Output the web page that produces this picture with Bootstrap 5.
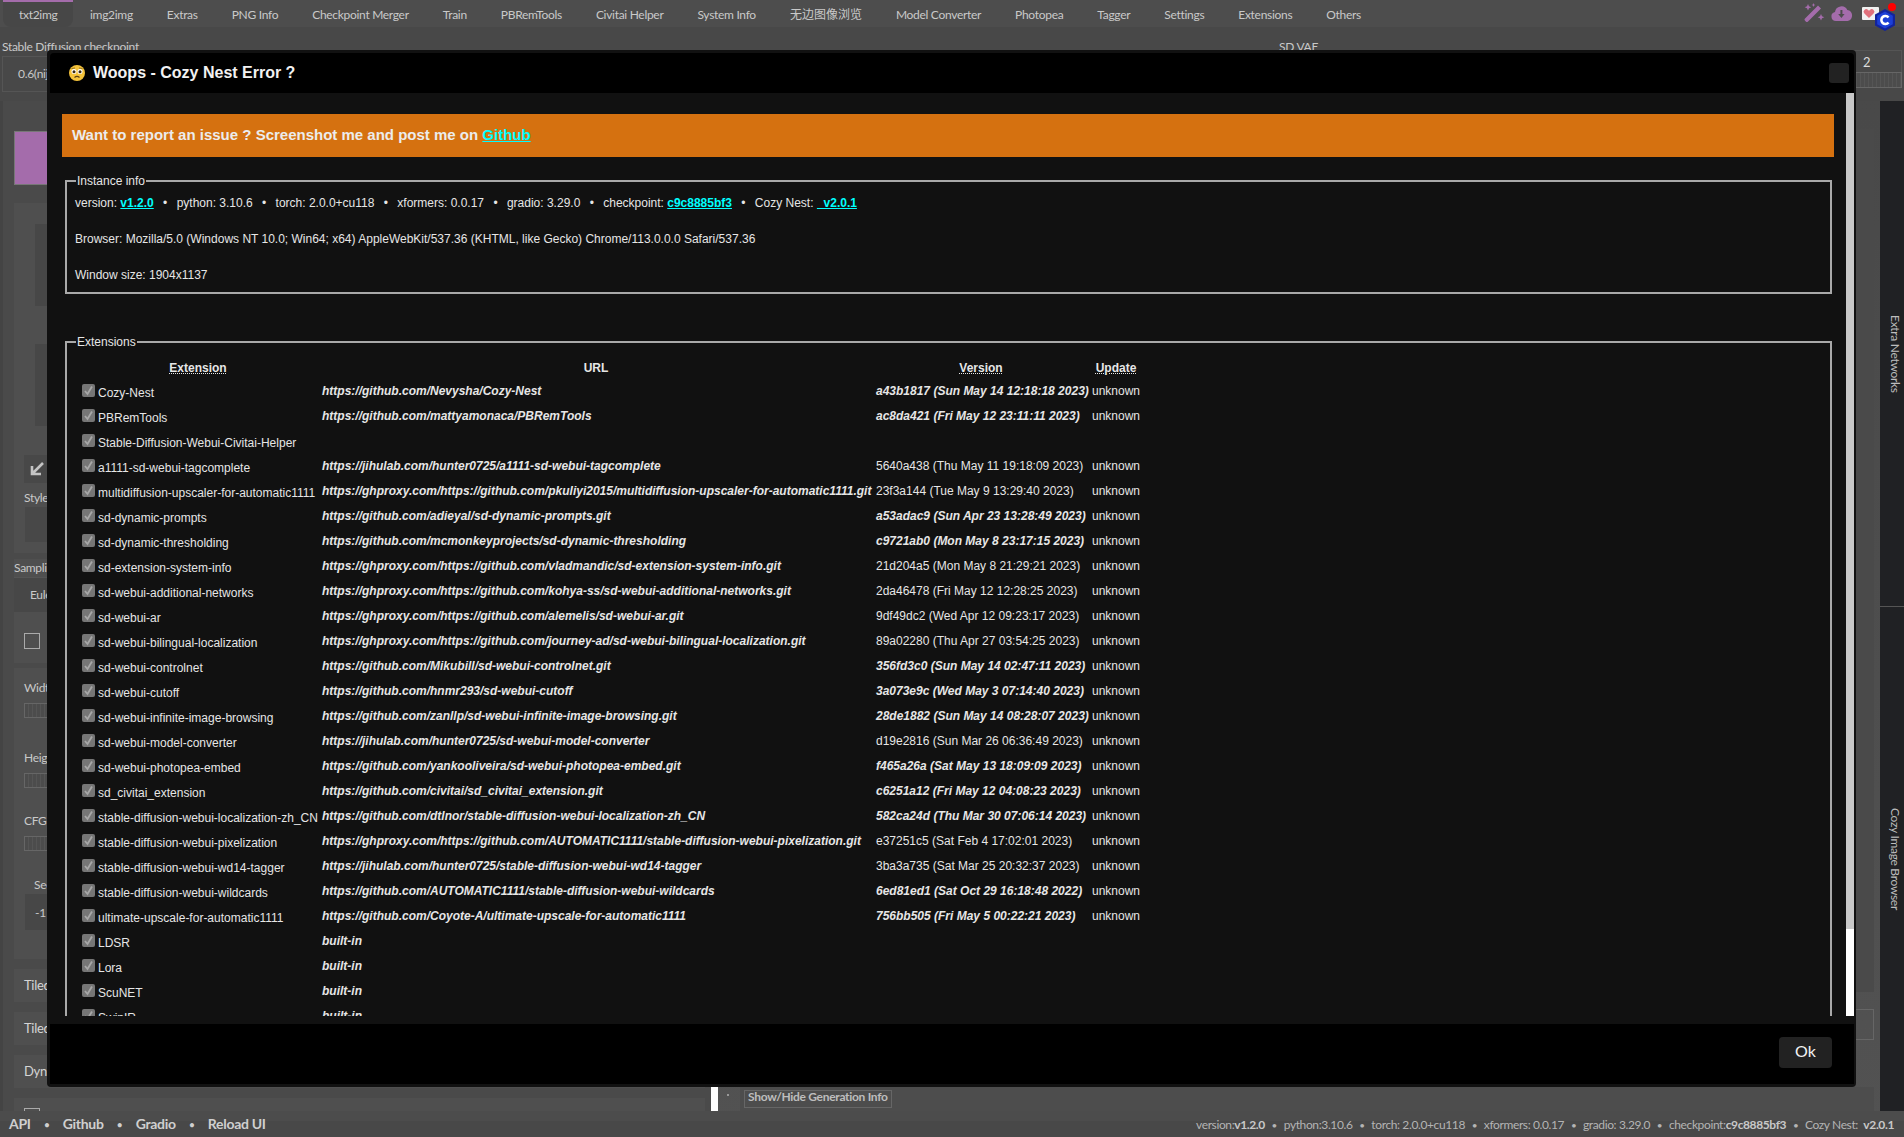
<!DOCTYPE html>
<html lang="en">
<head>
<meta charset="utf-8">
<title>Woops - Cozy Nest Error ?</title>
<link href="https://cdn.jsdelivr.net/npm/bootstrap@5.3.0/dist/css/bootstrap.min.css" rel="stylesheet">
<style>
html,body{height:1137px;overflow:hidden}
body{background:linear-gradient(#484848,#525252);color:#c9c9c9;font-family:Lato,"Noto Sans CJK SC",sans-serif;font-size:12px;line-height:15px;letter-spacing:-.3px;position:relative}
.stage{height:1137px}
.tabbar{height:27px;background:#4d4d4d;flex:none}
.tabbar-tabs{padding-left:3px}
.tabitem{padding:0 17px;height:27px;line-height:29px;color:#c9c9c9;white-space:nowrap}
.tabitem-on{width:70px;padding:0 0 0 16px;background:#474747;border-top:2px solid #a46cab;line-height:26px;border-radius:0 0 8px 8px}
.tabitem-cjk{letter-spacing:0}
.topicons{width:110px;position:relative}
.toprow{height:74px;flex:none;background:#484848}
.ckpt{width:1279px;padding:12px 0 0 2px}
.ckpt-box{margin-top:2px;height:36px;width:600px;border:1px solid #555;padding:9px 0 0 15px}
.vae{width:549px;padding-top:12px}
.numcol{width:74px;padding-top:23px}
.num-box{height:22px;border:1px solid #555;border-bottom:0;padding:4px 0 0 34px;color:#ddd;font-size:13px}
.hatch{background:repeating-linear-gradient(90deg,#4c4c4c 0,#4c4c4c 3px,#555 3px,#555 4px)}
.num-slide{height:16px;border:1px solid #666}
.workrow{height:1010px;flex:none;overflow:hidden}
.leftwrap{width:711px;padding:30px 6px 0 14px;flex:none;overflow:hidden;background:linear-gradient(90deg,#444 0,#444 3px,#4a4a4a 3px)}
.btn-gen{height:54px;background:#a46cab;border:1px solid #777}
.pnl{background:#4f4f4f}
.pnl-a{height:350px;margin-top:18px;padding:21px 10px 0 10px}
.inset{height:82px;margin-left:11px;background:#474747}
.inset+.inset{margin-top:38px}
.arrowbtn{width:60px;height:28px;margin-top:29px;background:#484848;color:#c9c9c9;display:flex;align-items:center;padding-left:4px}
.stylelab{margin-top:7px;height:17px}
.stylebox{height:35px;background:#484848;margin:0 0 0 1px}
.pnl-b{height:104px;margin-top:6px}
.pnl-b-head{height:18px;padding-top:1px}
.pnl-b-box{height:35px;background:#474747;border-top:1px solid #555;padding:9px 0 0 16px}
.tick-off{width:16px;height:16px;border:1px solid #aaa;margin:21px 0 0 10px}
.pnl-c{height:291px;margin-top:5px;padding:12px 10px 0}
.slide{height:15px;border:1px solid #666;margin:8px 0 0}
.pnl-c-lab{margin-top:32px}
.pnl-c-lab.first{margin-top:0}
.pnl-c-lab.third{margin-top:25px}
.seed-lab{margin:26px 0 0 10px}
.seed-box{height:36px;background:#474747;margin:2px 0 0 1px;padding:11px 0 0 10px}
.acc{background:#4f4f4f;height:33px;padding:9px 10px 0;margin-top:10px;color:#d5d5d5;font-size:13px}
.acc-last{height:40px;padding:10px 0 0 10px}
.tick-small{width:16px;height:16px;border:1px solid #aaa}
.gutter{width:14px;flex:none;padding-top:986px}
.gutter-bar{width:7px;height:24px;background:#fff}
.rightwrap{flex:1;padding:28px 6px 0 0;overflow:hidden}
.rpanel{height:863px;background:#4a4a4a}
.rbox{height:31px;margin-top:17px;border:1px solid #666}
.gen-wrap{margin-top:47px;height:24px}
.gen-dot{width:2px;height:2px;background:#999;margin:7px 11px 0 2px;flex:none}
.gen-row{flex:1;background:#4d4d4d;padding:2px 0 0 4px}
.gen-btn{display:inline-block;height:18px;border:1px solid #666;padding:0 3px;line-height:12px;color:#bdbdbd;font-size:12px;font-weight:700}
.rail{width:24px;flex:none;background:#202124;height:1010px}
.railcell{height:505px;writing-mode:vertical-rl;color:#bdbdbd;font-size:12px;line-height:24px;padding-left:3px}
.railcell+.railcell{border-top:1px solid #555}
.footbar{height:26px;flex:none;background:linear-gradient(#4c4c4c 0,#4c4c4c 10px,#484848 10px);padding:0 10px 0 9px}
.foot-l{font-size:14px;font-weight:700;color:#cfcfcf}
.foot-l .dotsep{margin:0 13px;font-weight:400;font-size:11px}
.foot-r{color:#b4b4b4;font-size:12px;letter-spacing:-.38px;padding-top:2px;white-space:nowrap}
.foot-r .dotsep{margin:0 6.7px;font-size:10px}
.foot-r b{color:#c8c8c8}

.err-modal{position:absolute;left:47px;top:50px;width:1809px;height:1037px;background:#111;padding:3px 2px 3px 3px;border-radius:4px;display:flex;flex-direction:column;font-family:"Liberation Sans",Arial,sans-serif;letter-spacing:0;color:#e6e6e6;font-size:12px;line-height:14px}
.err-head{height:40px;flex:none;background:#000;border-radius:4px 4px 0 0;padding:0 5px 0 19px}
.err-title{font-size:16px;font-weight:700;line-height:20px;color:#f2f2f2;margin:0}
.err-x{width:20px;height:20px;padding:0;background:#222;border:0;border-radius:3px}
.err-x:hover{background:#222}
.err-body{height:931px;flex:none;padding-bottom:8px}
.err-scroll{flex:1;min-width:0;overflow:hidden;padding:21px 12px 0}
.err-bar{width:8px;flex:none;background:#fff}
.err-thumb{height:836px;background:#c8c8c8}
.err-banner{height:43px;background:#d57110;color:#ececec;font-size:15px;font-weight:700;line-height:41px;padding-left:10px}
a.cy{color:#0ff;text-decoration:underline}
.fs{border:2px solid #a9a9a9;margin:0 2px 0 3px;padding:0 8px;min-width:0}
.fs legend{float:none;width:auto;font-size:12px;line-height:14px;margin:0 0 0 1px;padding:0 1px}
.fs-info{margin-top:17px;padding-bottom:10px}
.fs-info p{margin:8px 0 22px;white-space:nowrap}
.fs-info p:last-child{margin-bottom:0}
.fs-info .sep{margin:0 9.35px}
.fs-ext{margin-top:41px;padding-bottom:40px}
.ext-tbl{table-layout:fixed;width:1066px;margin:8px 0 0 5px;border-collapse:separate;border-spacing:0}
.ext-tbl th{height:22px;padding:0 6px 0 0;text-align:center;font-weight:700;vertical-align:middle}
.ext-tbl th abbr{text-decoration:underline dotted;cursor:help}
.ext-tbl td{height:25px;padding:5px 0 0 0;vertical-align:top;white-space:nowrap;overflow:visible}
.ext-tbl td.bi{font-weight:700;font-style:italic}
.ext-row{padding-left:2px;gap:3px;margin-top:0}
.ext-row span{margin-top:2px}
.ext-check{appearance:none;-webkit-appearance:none;width:13px;height:13px;margin:0;flex:none;border-radius:2px;background:#767676 url("data:image/svg+xml,%3Csvg xmlns='http://www.w3.org/2000/svg' viewBox='0 0 13 13'%3E%3Cpath d='M3 7l2.5 3L10 2.5' fill='none' stroke='%23a8a8a8' stroke-width='1.8'/%3E%3C/svg%3E") center/13px 13px no-repeat}
.err-foot{height:60px;flex:none;background:#000;padding:13px 22px 0 0}
.err-ok{width:53px;height:31px;padding:0 0 3px;background:#222;border:0;border-radius:4px;color:#f2f2f2;font-family:Lato,sans-serif;font-size:16px;line-height:28px}
.err-ok:hover{background:#222;color:#f2f2f2}
</style>
</head>
<body>
<div class="stage d-flex flex-column">
  <nav class="tabbar d-flex justify-content-between">
    <div class="tabbar-tabs d-flex">
      <div class="tabitem tabitem-on">txt2img</div>
      <div class="tabitem">img2img</div><div class="tabitem">Extras</div><div class="tabitem">PNG Info</div><div class="tabitem">Checkpoint Merger</div><div class="tabitem">Train</div><div class="tabitem">PBRemTools</div><div class="tabitem">Civitai Helper</div><div class="tabitem">System Info</div><div class="tabitem tabitem-cjk">无边图像浏览</div><div class="tabitem">Model Converter</div><div class="tabitem">Photopea</div><div class="tabitem">Tagger</div><div class="tabitem">Settings</div><div class="tabitem">Extensions</div><div class="tabitem">Others</div>
    </div>
    <div class="topicons">
      <svg width="110" height="34" viewBox="0 0 110 34" style="position:absolute;left:0;top:0">
        <g transform="translate(8 1)" fill="#a46cab">
          <path d="M16 4.500l3 3L6 20.500a1.500 1.500 0 0 1-2.200 0L3 19.700a1.500 1.500 0 0 1 0-2.200z"/>
          <path d="M6 3l1 2.300 2.300 1-2.300 1L6 9.600l-1-2.300-2.300-1 2.300-1zM19 13l1 2.300 2.300 1-2.300 1-1 2.300-1-2.300-2.300-1 2.300-1zM11.500 2l.6 1.400 1.400.6-1.400.6-.6 1.400-.6-1.400-1.400-.6 1.400-.6z"/>
        </g>
        <g transform="translate(37 0)">
          <path d="M5 21a4.500 4.500 0 0 1-1-8.900A6.500 6.500 0 0 1 16.300 10a5.600 5.600 0 0 1 .4 11z" fill="#a46cab"/>
          <path d="M9.400 10h2v4h2.200l-3.200 4-3.200-4h2.200z" fill="#4d4d4d"/>
        </g>
        <rect x="68" y="7" width="17" height="13" rx="1" fill="#f1f1f1"/>
        <path d="M75 18l-4.600-4.400a2.600 2.600 0 0 1 3.700-3.700l.9.900.9-.900a2.600 2.600 0 0 1 3.700 3.700z" fill="#e0707c"/>
        <path d="M91 9l10 5.500v11L91 31l-10-5.500v-11z" fill="#12239c"/>
        <path d="M91 11.500l7.800 4.300v8.400L91 28.500l-7.800-4.300v-8.400z" fill="#1c3fd6"/>
        <path d="M94.500 17.500a4 4 0 1 0 0 5" fill="none" stroke="#fff" stroke-width="2.600"/>
        <circle cx="98" cy="7" r="4" fill="#f00"/>
      </svg>
    </div>
  </nav>

  <section class="toprow d-flex">
    <div class="ckpt">Stable Diffusion checkpoint
      <div class="ckpt-box">0.6(nijiv5style)</div>
    </div>
    <div class="vae">SD VAE</div>
    <div class="numcol">
      <div class="num-box">2</div>
      <div class="num-slide hatch"></div>
    </div>
  </section>

  <section class="workrow d-flex">
    <div class="leftwrap">
      <div class="btn-gen"></div>
      <div class="pnl pnl-a">
        <div class="inset"></div>
        <div class="inset"></div>
        <div class="arrowbtn"><svg width="18" height="18" viewBox="0 0 18 18"><path d="M15 3L4 14M4 6v8h9" fill="none" stroke="#c4c4c4" stroke-width="2.600"/></svg></div>
        <div class="stylelab">Styles</div>
        <div class="stylebox"></div>
      </div>
      <div class="pnl pnl-b">
        <div class="pnl-b-head">Sampling method</div>
        <div class="pnl-b-box">Euler a</div>
        <div class="tick-off"></div>
      </div>
      <div class="pnl pnl-c">
        <div class="pnl-c-lab first">Width</div>
        <div class="slide hatch"></div>
        <div class="pnl-c-lab">Height</div>
        <div class="slide hatch"></div>
        <div class="pnl-c-lab third">CFG Scale</div>
        <div class="slide hatch"></div>
        <div class="seed-lab">Seed</div>
        <div class="seed-box">-1</div>
      </div>
      <div class="acc">Tiled Diffusion</div>
      <div class="acc">Tiled VAE</div>
      <div class="acc">Dynamic Prompts</div>
      <div class="acc acc-last"><div class="tick-small"></div></div>
    </div>
    <div class="gutter"><div class="gutter-bar"></div></div>
    <div class="rightwrap">
      <div class="rpanel"></div>
      <div class="rbox"></div>
      <div class="gen-wrap d-flex">
        <div class="gen-dot"></div>
        <div class="gen-row"><span class="gen-btn">Show/Hide Generation Info</span></div>
      </div>
    </div>
    <aside class="rail">
      <div class="railcell d-flex align-items-center justify-content-center">Extra Networks</div>
      <div class="railcell d-flex align-items-center justify-content-center">Cozy Image Browser</div>
    </aside>
  </section>

  <footer class="footbar d-flex justify-content-between align-items-center">
    <div class="foot-l">API<span class="dotsep">•</span>Github<span class="dotsep">•</span>Gradio<span class="dotsep">•</span>Reload UI</div>
    <div class="foot-r">version:<b>v1.2.0</b><span class="dotsep">•</span>python:3.10.6<span class="dotsep">•</span>torch: 2.0.0+cu118<span class="dotsep">•</span>xformers: 0.0.17<span class="dotsep">•</span>gradio: 3.29.0<span class="dotsep">•</span>checkpoint:<b>c9c8885bf3</b><span class="dotsep">•</span>Cozy Nest: &nbsp;<b>v2.0.1</b></div>
  </footer>
</div>

<div class="err-modal" role="dialog">
  <header class="err-head d-flex justify-content-between align-items-center">
    <div class="d-flex align-items-center gap-2">
      <svg width="16" height="16" viewBox="0 0 16 16"><circle cx="8" cy="8" r="8" fill="#f5c33b"/><circle cx="5" cy="6.600" r="2.500" fill="#fff"/><circle cx="11" cy="6.600" r="2.500" fill="#fff"/><circle cx="5" cy="6.800" r="1.500" fill="#3a2a12"/><circle cx="11" cy="6.800" r="1.500" fill="#3a2a12"/><path d="M2.500 3.500L6 3M13.500 3.500L10 3" stroke="#7a5a14" stroke-width=".8"/><path d="M5.500 12.500q2.500-2.400 5 0" fill="none" stroke="#5a3e10" stroke-width="1.200"/></svg>
      <h5 class="err-title">Woops - Cozy Nest Error ?</h5>
    </div>
    <button type="button" class="btn err-x" aria-label="Close"></button>
  </header>

  <div class="err-body d-flex">
    <div class="err-scroll">
      <div class="err-banner">Want to report an issue ? Screenshot me and post me on <a class="cy" href="#">Github</a></div>

      <fieldset class="fs fs-info">
        <legend>Instance info</legend>
        <p>version: <a class="cy fw-bold" href="#">v1.2.0</a><span class="sep">•</span>python: 3.10.6<span class="sep">•</span>torch: 2.0.0+cu118<span class="sep">•</span>xformers: 0.0.17<span class="sep">•</span>gradio: 3.29.0<span class="sep">•</span>checkpoint: <a class="cy fw-bold" href="#">c9c8885bf3</a><span class="sep">•</span>Cozy Nest: <a class="cy fw-bold" href="#">&nbsp;&nbsp;v2.0.1</a></p>
        <p>Browser: Mozilla/5.0 (Windows NT 10.0; Win64; x64) AppleWebKit/537.36 (KHTML, like Gecko) Chrome/113.0.0.0 Safari/537.36</p>
        <p>Window size: 1904x1137</p>
      </fieldset>

      <fieldset class="fs fs-ext">
        <legend>Extensions</legend>
        <table class="ext-tbl">
          <colgroup><col style="width:242px"><col style="width:554px"><col style="width:216px"><col style="width:54px"></colgroup>
          <thead><tr><th><abbr>Extension</abbr></th><th>URL</th><th><abbr>Version</abbr></th><th><abbr>Update</abbr></th></tr></thead>
          <tbody>
<tr><td><label class="ext-row d-flex"><input class="ext-check" type="checkbox" checked disabled><span>Cozy-Nest</span></label></td><td class="bi">https://github.com/Nevysha/Cozy-Nest</td><td class="bi">a43b1817 (Sun May 14 12:18:18 2023)</td><td>unknown</td></tr>
<tr><td><label class="ext-row d-flex"><input class="ext-check" type="checkbox" checked disabled><span>PBRemTools</span></label></td><td class="bi">https://github.com/mattyamonaca/PBRemTools</td><td class="bi">ac8da421 (Fri May 12 23:11:11 2023)</td><td>unknown</td></tr>
<tr><td><label class="ext-row d-flex"><input class="ext-check" type="checkbox" checked disabled><span>Stable-Diffusion-Webui-Civitai-Helper</span></label></td><td></td><td></td><td></td></tr>
<tr><td><label class="ext-row d-flex"><input class="ext-check" type="checkbox" checked disabled><span>a1111-sd-webui-tagcomplete</span></label></td><td class="bi">https://jihulab.com/hunter0725/a1111-sd-webui-tagcomplete</td><td>5640a438 (Thu May 11 19:18:09 2023)</td><td>unknown</td></tr>
<tr><td><label class="ext-row d-flex"><input class="ext-check" type="checkbox" checked disabled><span>multidiffusion-upscaler-for-automatic1111</span></label></td><td class="bi">https://ghproxy.com/https://github.com/pkuliyi2015/multidiffusion-upscaler-for-automatic1111.git</td><td>23f3a144 (Tue May 9 13:29:40 2023)</td><td>unknown</td></tr>
<tr><td><label class="ext-row d-flex"><input class="ext-check" type="checkbox" checked disabled><span>sd-dynamic-prompts</span></label></td><td class="bi">https://github.com/adieyal/sd-dynamic-prompts.git</td><td class="bi">a53adac9 (Sun Apr 23 13:28:49 2023)</td><td>unknown</td></tr>
<tr><td><label class="ext-row d-flex"><input class="ext-check" type="checkbox" checked disabled><span>sd-dynamic-thresholding</span></label></td><td class="bi">https://github.com/mcmonkeyprojects/sd-dynamic-thresholding</td><td class="bi">c9721ab0 (Mon May 8 23:17:15 2023)</td><td>unknown</td></tr>
<tr><td><label class="ext-row d-flex"><input class="ext-check" type="checkbox" checked disabled><span>sd-extension-system-info</span></label></td><td class="bi">https://ghproxy.com/https://github.com/vladmandic/sd-extension-system-info.git</td><td>21d204a5 (Mon May 8 21:29:21 2023)</td><td>unknown</td></tr>
<tr><td><label class="ext-row d-flex"><input class="ext-check" type="checkbox" checked disabled><span>sd-webui-additional-networks</span></label></td><td class="bi">https://ghproxy.com/https://github.com/kohya-ss/sd-webui-additional-networks.git</td><td>2da46478 (Fri May 12 12:28:25 2023)</td><td>unknown</td></tr>
<tr><td><label class="ext-row d-flex"><input class="ext-check" type="checkbox" checked disabled><span>sd-webui-ar</span></label></td><td class="bi">https://ghproxy.com/https://github.com/alemelis/sd-webui-ar.git</td><td>9df49dc2 (Wed Apr 12 09:23:17 2023)</td><td>unknown</td></tr>
<tr><td><label class="ext-row d-flex"><input class="ext-check" type="checkbox" checked disabled><span>sd-webui-bilingual-localization</span></label></td><td class="bi">https://ghproxy.com/https://github.com/journey-ad/sd-webui-bilingual-localization.git</td><td>89a02280 (Thu Apr 27 03:54:25 2023)</td><td>unknown</td></tr>
<tr><td><label class="ext-row d-flex"><input class="ext-check" type="checkbox" checked disabled><span>sd-webui-controlnet</span></label></td><td class="bi">https://github.com/Mikubill/sd-webui-controlnet.git</td><td class="bi">356fd3c0 (Sun May 14 02:47:11 2023)</td><td>unknown</td></tr>
<tr><td><label class="ext-row d-flex"><input class="ext-check" type="checkbox" checked disabled><span>sd-webui-cutoff</span></label></td><td class="bi">https://github.com/hnmr293/sd-webui-cutoff</td><td class="bi">3a073e9c (Wed May 3 07:14:40 2023)</td><td>unknown</td></tr>
<tr><td><label class="ext-row d-flex"><input class="ext-check" type="checkbox" checked disabled><span>sd-webui-infinite-image-browsing</span></label></td><td class="bi">https://github.com/zanllp/sd-webui-infinite-image-browsing.git</td><td class="bi">28de1882 (Sun May 14 08:28:07 2023)</td><td>unknown</td></tr>
<tr><td><label class="ext-row d-flex"><input class="ext-check" type="checkbox" checked disabled><span>sd-webui-model-converter</span></label></td><td class="bi">https://jihulab.com/hunter0725/sd-webui-model-converter</td><td>d19e2816 (Sun Mar 26 06:36:49 2023)</td><td>unknown</td></tr>
<tr><td><label class="ext-row d-flex"><input class="ext-check" type="checkbox" checked disabled><span>sd-webui-photopea-embed</span></label></td><td class="bi">https://github.com/yankooliveira/sd-webui-photopea-embed.git</td><td class="bi">f465a26a (Sat May 13 18:09:09 2023)</td><td>unknown</td></tr>
<tr><td><label class="ext-row d-flex"><input class="ext-check" type="checkbox" checked disabled><span>sd_civitai_extension</span></label></td><td class="bi">https://github.com/civitai/sd_civitai_extension.git</td><td class="bi">c6251a12 (Fri May 12 04:08:23 2023)</td><td>unknown</td></tr>
<tr><td><label class="ext-row d-flex"><input class="ext-check" type="checkbox" checked disabled><span>stable-diffusion-webui-localization-zh_CN</span></label></td><td class="bi">https://github.com/dtlnor/stable-diffusion-webui-localization-zh_CN</td><td class="bi">582ca24d (Thu Mar 30 07:06:14 2023)</td><td>unknown</td></tr>
<tr><td><label class="ext-row d-flex"><input class="ext-check" type="checkbox" checked disabled><span>stable-diffusion-webui-pixelization</span></label></td><td class="bi">https://ghproxy.com/https://github.com/AUTOMATIC1111/stable-diffusion-webui-pixelization.git</td><td>e37251c5 (Sat Feb 4 17:02:01 2023)</td><td>unknown</td></tr>
<tr><td><label class="ext-row d-flex"><input class="ext-check" type="checkbox" checked disabled><span>stable-diffusion-webui-wd14-tagger</span></label></td><td class="bi">https://jihulab.com/hunter0725/stable-diffusion-webui-wd14-tagger</td><td>3ba3a735 (Sat Mar 25 20:32:37 2023)</td><td>unknown</td></tr>
<tr><td><label class="ext-row d-flex"><input class="ext-check" type="checkbox" checked disabled><span>stable-diffusion-webui-wildcards</span></label></td><td class="bi">https://github.com/AUTOMATIC1111/stable-diffusion-webui-wildcards</td><td class="bi">6ed81ed1 (Sat Oct 29 16:18:48 2022)</td><td>unknown</td></tr>
<tr><td><label class="ext-row d-flex"><input class="ext-check" type="checkbox" checked disabled><span>ultimate-upscale-for-automatic1111</span></label></td><td class="bi">https://github.com/Coyote-A/ultimate-upscale-for-automatic1111</td><td class="bi">756bb505 (Fri May 5 00:22:21 2023)</td><td>unknown</td></tr>
<tr><td><label class="ext-row d-flex"><input class="ext-check" type="checkbox" checked disabled><span>LDSR</span></label></td><td class="bi">built-in</td><td></td><td></td></tr>
<tr><td><label class="ext-row d-flex"><input class="ext-check" type="checkbox" checked disabled><span>Lora</span></label></td><td class="bi">built-in</td><td></td><td></td></tr>
<tr><td><label class="ext-row d-flex"><input class="ext-check" type="checkbox" checked disabled><span>ScuNET</span></label></td><td class="bi">built-in</td><td></td><td></td></tr>
<tr><td><label class="ext-row d-flex"><input class="ext-check" type="checkbox" checked disabled><span>SwinIR</span></label></td><td class="bi">built-in</td><td></td><td></td></tr>
          </tbody>
        </table>
      </fieldset>
    </div>
    <div class="err-bar"><div class="err-thumb"></div></div>
  </div>

  <footer class="err-foot d-flex justify-content-end align-items-start">
    <button type="button" class="btn err-ok">Ok</button>
  </footer>
</div>
<script src="https://cdn.jsdelivr.net/npm/bootstrap@5.3.0/dist/js/bootstrap.bundle.min.js"></script>
</body>
</html>
